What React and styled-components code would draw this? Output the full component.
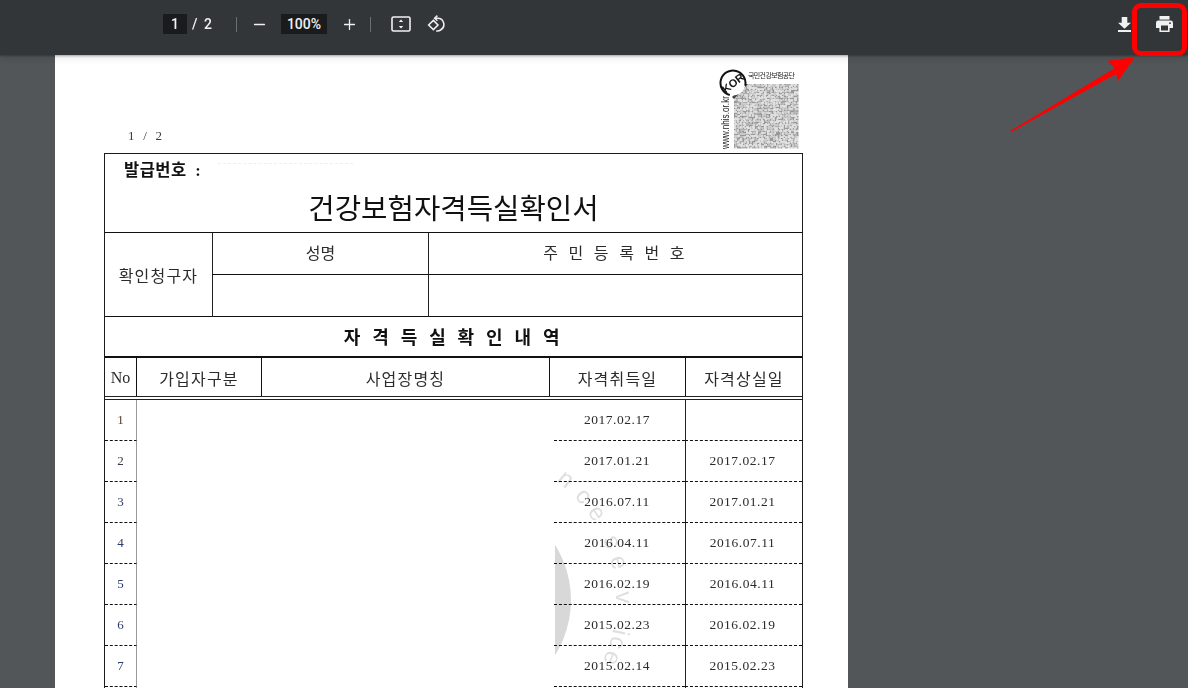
import React from 'react';
import styled, { createGlobalStyle } from 'styled-components';
import { Minus, Plus } from 'lucide-react';

const GlobalStyle = createGlobalStyle`
  html, body {
    margin: 0;
    padding: 0;
    height: 688px;
    overflow: hidden;
    background: #525659;
  }
  * {
    box-sizing: border-box;
  }
`;

const sans = `Roboto, "Noto Sans", "Liberation Sans", sans-serif`;
const doc = `"Liberation Serif", "Noto Sans CJK KR", serif`;

const Viewer = styled.div`
  position: relative;
  width: 1188px;
  height: 688px;
  overflow: hidden;
  background: #525659;
`;

const Toolbar = styled.div`
  position: relative;
  z-index: 2;
  display: flex;
  align-items: center;
  height: 55px;
  padding: 0 15px 1px 163px;
  background: #323639;
  box-shadow: 0 -1px 8px rgba(0, 0, 0, 0.09), 0 4px 8px rgba(0, 0, 0, 0.06), 0 1px 2px rgba(0, 0, 0, 0.3);
  color: #f1f1f1;
  font-family: ${sans};
  font-size: 14px;
  font-weight: 500;
`;

const NumberBox = styled.span`
  display: flex;
  align-items: center;
  justify-content: center;
  width: ${(p) => p.$width}px;
  height: 20px;
  background: #191b1c;
  margin: -6px 0 0;
`;

const PageTotal = styled.span`
  margin: -6px 0 0 5px;
  word-spacing: 3px;
  width: 44px;
`;

const Divider = styled.span`
  width: 1px;
  height: 15px;
  margin: -6px 0 0 ${(p) => p.$left || 0}px;
  background: #6c6f71;
`;

const ToolIcon = styled.span`
  display: flex;
  align-items: center;
  justify-content: center;
  width: ${(p) => p.$width || 20}px;
  margin: -6px 0 0 ${(p) => p.$left || 0}px;
`;

const Spacer = styled.span`
  flex: 1;
`;

const Main = styled.main`
  padding-left: 55px;
`;

const Sheet = styled.div`
  position: relative;
  width: 793px;
  height: 633px;
  padding: 0 45px 0 49px;
  background: #fff;
  overflow: hidden;
`;

const SheetHead = styled.div`
  display: flex;
  justify-content: space-between;
  height: 98px;
`;

const PageMark = styled.div`
  padding: 73px 0 0 24px;
  font-family: ${doc};
  font-size: 13px;
  letter-spacing: 2.7px;
  color: #3a3a4a;
`;

const Stamp = styled.svg`
  display: block;
  margin: 14px 3px 0 0;
`;

const FormTable = styled.div`
  border: solid #1c1c1c;
  border-width: 1px 1px 0;
  color: #2b2b2b;
  font-family: ${doc};
  width: 699px;
  height: 535px;
`;

const IssueBlock = styled.div`
  height: 79px;
  border-bottom: 1px solid #111;
  padding: 3px 0 0 19px;
`;

const IssueNo = styled.div`
  display: flex;
  align-items: flex-start;
  gap: 17px;
  color: #111;
  font-size: 16.5px;
  font-weight: 700;
  letter-spacing: 0.5px;
  word-spacing: 4px;
`;

const Blurred = styled.span`
  width: 135px;
  margin-top: 6px;
  border-top: 1px dashed #eeeeee;
`;

const DocTitle = styled.h1`
  margin: 8px 19px 0 0;
  color: #111;
  font-size: 28.7px;
  font-weight: 400;
  line-height: 40px;
  text-align: center;
`;

const ApplicantGrid = styled.div`
  display: grid;
  grid-template-columns: 107px 216px 1fr;
  grid-template-rows: 42px 42px;
  height: 84px;
  border-bottom: 1px solid #111;
`;

const ApplicantCell = styled.div`
  display: flex;
  align-items: center;
  justify-content: center;
  padding-bottom: ${(p) => p.$raise || 0}px;
  font-size: 16px;
  letter-spacing: ${(p) => p.$spacing || 0}px;
  border-left: ${(p) => (p.$first ? 'none' : '1px solid #222')};
  border-bottom: ${(p) => (p.$under ? '1px solid #111' : 'none')};
  grid-row: ${(p) => p.$row || 'auto'};
`;

const SectionTitle = styled.div`
  display: flex;
  align-items: center;
  justify-content: center;
  height: 41px;
  padding-bottom: 2px;
  border-bottom: 2px solid #111;
  color: #111;
  font-size: 18px;
  font-weight: 700;
  letter-spacing: 3.7px;
`;

const HeaderRow = styled.div`
  display: grid;
  grid-template-columns: 31px 125px 288px 136px 1fr;
  height: 42px;
  border-bottom: 4px double #222;
`;

const HeaderCell = styled.div`
  display: flex;
  align-items: center;
  justify-content: center;
  padding-top: 2px;
  font-size: 16px;
  letter-spacing: ${(p) => (p.$first ? 0 : 1.2)}px;
  border-left: ${(p) => (p.$first ? 'none' : '1px solid #111')};
`;

const RowsArea = styled.div`
  position: relative;
`;

const DataRow = styled.div`
  display: grid;
  grid-template-columns: 32px 417px 131px 1fr;
  height: 41px;
`;

const NoCell = styled.div`
  display: flex;
  align-items: center;
  justify-content: center;
  border-right: 1px solid #999;
  border-bottom: 1px dashed #111;
  color: ${(p) => p.$color};
  font-size: 13px;
`;

const Masked = styled.div`
  background: #fff;
`;

const DateCell = styled.div`
  display: flex;
  align-items: center;
  justify-content: center;
  padding-right: ${(p) => (p.$narrow ? 5 : 3)}px;
  border-left: ${(p) => (p.$narrow ? 'none' : '1px solid #222')};
  border-bottom: 1px dashed #111;
  font-size: 13.5px;
  letter-spacing: 0.55px;
`;

const Watermark = styled.svg`
  position: absolute;
  left: 450px;
  top: 0;
  mix-blend-mode: multiply;
  pointer-events: none;
`;

const CallBox = styled.div`
  position: absolute;
  z-index: 3;
  left: 1132px;
  top: 3px;
  width: 55px;
  height: 53px;
  border: 5px solid #fe0000;
  border-radius: 9px;
`;

const CallArrow = styled.svg`
  position: absolute;
  z-index: 3;
  left: 1000px;
  top: 50px;
`;

const rows = [
  ['1', '#5a3a2a', '2017.02.17', ''],
  ['2', '#3a3a4a', '2017.01.21', '2017.02.17'],
  ['3', '#2c3a6a', '2016.07.11', '2017.01.21'],
  ['4', '#2c3a6a', '2016.04.11', '2016.07.11'],
  ['5', '#2c3a6a', '2016.02.19', '2016.04.11'],
  ['6', '#2c3a6a', '2015.02.23', '2016.02.19'],
  ['7', '#2c3a6a', '2015.02.14', '2015.02.23'],
  ['', '#2c3a6a', '', ''],
];

const waterLetters = [
  ['n', 39],
  ['c', 48],
  ['e', 56],
  ['s', 68],
  ['e', 76],
  ['v', 89],
  ['i', 102],
  ['c', 106],
  ['e', 112],
];

// seeded noise for the barcode square, split by grey level
function noisePaths() {
  let seed = 7;
  const rand = () => {
    seed = (seed * 16807) % 2147483647;
    return seed / 2147483647;
  };
  const paths = ['', '', '', ''];
  const cell = 1.5;
  for (let y = 0; y < 43; y++) {
    for (let x = 0; x < 43; x++) {
      const level = Math.floor(rand() * 4);
      paths[level] += `M${x * cell} ${y * cell}h${cell}v${cell}h-${cell}z`;
    }
  }
  return paths;
}

const noise = noisePaths();
const noiseColors = ['#999999', '#b0b0b0', '#c8c8c8', '#e0e0e0'];

function FitIcon() {
  return (
    <svg width="20" height="16" viewBox="0 0 20 16" fill="none">
      <rect x="1" y="1" width="18" height="14" rx="1.5" stroke="#f1f1f1" strokeWidth="1.6" />
      <path d="M10 3.4l2.2 2.6H7.8zM10 12.6l-2.2-2.6h4.4z" fill="#f1f1f1" />
    </svg>
  );
}

function RotateIcon() {
  return (
    <svg width="18" height="18" viewBox="0 0 18 18" fill="none" stroke="#f1f1f1" strokeWidth="1.5">
      <path d="M6.4 5.4 1.6 10l4.8 4.6L11 10z" />
      <path d="M8 3.2h2.6a6.3 6.3 0 0 1 3 11.8 6.2 6.2 0 0 1-4.4.9" />
      <path d="M10.4 0.6 7.6 3.2l2.8 2.6" fill="none" />
    </svg>
  );
}

function DownloadIcon() {
  return (
    <svg width="13" height="15" viewBox="0 0 14 16" fill="#f1f1f1">
      <path d="M4 0h6v6h4l-7 6.6L0 6h4zM0 14h14v2H0z" />
    </svg>
  );
}

function PrintIcon() {
  return (
    <svg width="17" height="16" viewBox="0 0 17 16" fill="#f1f1f1">
      <path d="M3.5 0h10v3.6h-10z" />
      <path
        fillRule="evenodd"
        d="M2.4 4.6h12.2a2.4 2.4 0 0 1 2.4 2.4v5h-3.4v4H3.4v-4H0V7a2.4 2.4 0 0 1 2.4-2.4zM5 9.4v5h7v-5zM14 6.3a.9.9 0 1 0 0 1.8.9.9 0 0 0 0-1.8z"
      />
    </svg>
  );
}

function QrStamp() {
  return (
    <Stamp width="82" height="82" viewBox="0 0 82 82">
      <g transform="translate(16 15)">
        {noise.map((d, i) => (
          <path key={i} d={d} fill={noiseColors[i]} />
        ))}
      </g>
      <path d="M14 28 27 15h3L16 30z" fill="#444" />
      <text x="30" y="9" fontSize="7" fontFamily={`"Noto Sans CJK KR", sans-serif`} fill="#222" textLength="47">
        국민건강보험공단
      </text>
      <circle cx="15" cy="14" r="12.5" fill="#fff" stroke="#111" strokeWidth="2" strokeDasharray="58 21" transform="rotate(105 15 14)" />
      <text
        x="15"
        y="18"
        textAnchor="middle"
        fontSize="11"
        fontWeight="700"
        fontFamily={`"Liberation Sans", sans-serif`}
        fill="#111"
        transform="rotate(-38 15 14)"
      >
        KOR
      </text>
      <text
        x="-80"
        y="11"
        fontSize="10"
        fontFamily={`"Liberation Sans", sans-serif`}
        fill="#222"
        transform="rotate(-90)"
        textLength="53"
        lengthAdjust="spacingAndGlyphs"
      >
        www.nhis.or.kr
      </text>
    </Stamp>
  );
}

function WatermarkArt() {
  // circle centre sits left of the mask, letters run around it
  const cx = -87;
  const cy = 200;
  return (
    <Watermark width="150" height="290" viewBox="0 0 150 290">
      <circle cx={cx} cy={cy} r={103} fill="#d8d8d8" />
      {waterLetters.map(([ch, deg], i) => {
        const a = (deg * Math.PI) / 180;
        const x = cx + 148 * Math.sin(a);
        const y = cy - 148 * Math.cos(a);
        return (
          <text
            key={i}
            x={x}
            y={y}
            textAnchor="middle"
            fontSize="24"
            fontFamily={`"Liberation Sans", sans-serif`}
            fill="#dfdfdf"
            transform={`rotate(${deg} ${x} ${y})`}
          >
            {ch}
          </text>
        );
      })}
    </Watermark>
  );
}

export default function App() {
  return (
    <Viewer>
      <GlobalStyle />
      <Toolbar>
        <NumberBox $width={24}>1</NumberBox>
        <PageTotal>/ 2</PageTotal>
        <Divider />
        <ToolIcon $width={44}>
          <Minus size={17} color="#f1f1f1" strokeWidth={1.8} />
        </ToolIcon>
        <NumberBox $width={46}>100%</NumberBox>
        <ToolIcon $left={5} $width={34}>
          <Plus size={17} color="#f1f1f1" strokeWidth={1.8} />
        </ToolIcon>
        <Divider $left={4} />
        <ToolIcon $left={20}>
          <FitIcon />
        </ToolIcon>
        <ToolIcon $left={15} $width={20}>
          <RotateIcon />
        </ToolIcon>
        <Spacer />
        <ToolIcon $width={13}>
          <DownloadIcon />
        </ToolIcon>
        <ToolIcon $left={25} $width={17}>
          <PrintIcon />
        </ToolIcon>
      </Toolbar>
      <Main>
        <Sheet>
          <SheetHead>
            <PageMark>1 / 2</PageMark>
            <QrStamp />
          </SheetHead>
          <FormTable>
            <IssueBlock>
              <IssueNo>
                발급번호 :<Blurred />
              </IssueNo>
              <DocTitle>건강보험자격득실확인서</DocTitle>
            </IssueBlock>
            <ApplicantGrid>
              <ApplicantCell $first $row="1 / span 2" $spacing={1.2}>
                확인청구자
              </ApplicantCell>
              <ApplicantCell $under $raise={3}>
                성명
              </ApplicantCell>
              <ApplicantCell $under $raise={3} $spacing={3.3}>
                주 민 등 록 번 호
              </ApplicantCell>
              <ApplicantCell />
              <ApplicantCell />
            </ApplicantGrid>
            <SectionTitle>자 격 득 실 확 인 내 역</SectionTitle>
            <HeaderRow>
              <HeaderCell $first>No</HeaderCell>
              <HeaderCell>가입자구분</HeaderCell>
              <HeaderCell>사업장명칭</HeaderCell>
              <HeaderCell>자격취득일</HeaderCell>
              <HeaderCell>자격상실일</HeaderCell>
            </HeaderRow>
            <RowsArea>
              {rows.map(([no, color, from, to], i) => (
                <DataRow key={i}>
                  <NoCell $color={color}>{no}</NoCell>
                  <Masked />
                  <DateCell $narrow>{from}</DateCell>
                  <DateCell>{to}</DateCell>
                </DataRow>
              ))}
              <WatermarkArt />
            </RowsArea>
          </FormTable>
        </Sheet>
      </Main>
      <CallBox />
      <CallArrow width="150" height="90" viewBox="0 0 150 90">
        <path d="M10 81 115 18 107 11 135 7 118 31 116 24 11 82z" fill="#fe0000" />
      </CallArrow>
    </Viewer>
  );
}
